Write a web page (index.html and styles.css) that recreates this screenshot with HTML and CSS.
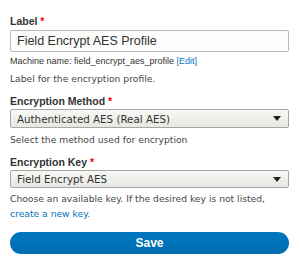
FILE: index.html
```html
<!DOCTYPE html>
<html lang="en">
<head>
<meta charset="UTF-8">
<meta name="viewport" content="width=device-width, initial-scale=1.0">
<title>Field Encrypt AES Profile</title>
<link rel="stylesheet" href="styles.css">
</head>
<body>

<form class="profile-form">
    <!-- Label -->
    <div class="form-item">
        <label class="form-label" for="label">Label <span class="required">*</span></label>
        <input type="text" id="label" class="form-text" value="Field Encrypt AES Profile">
        <div class="machine-name">Machine name: field_encrypt_aes_profile <a href="#">[Edit]</a></div>
        <div class="description">Label for the encryption profile.</div>
    </div>

    <!-- Encryption method -->
    <div class="form-item">
        <label class="form-label" for="method">Encryption Method <span class="required">*</span></label>
        <div class="select">
            <span>Authenticated AES (Real AES)</span>
            <span class="arrow"></span>
        </div>
        <div class="description">Select the method used for encryption</div>
    </div>

    <!-- Encryption key -->
    <div class="form-item item-key">
        <label class="form-label" for="key">Encryption Key <span class="required">*</span></label>
        <div class="select select-key">
            <span>Field Encrypt AES</span>
            <span class="arrow"></span>
        </div>
        <div class="description desc-key">Choose an available key. If the desired key is not listed,<br><a href="#">create a new key.</a></div>
    </div>

    <button type="button" class="btn">Save</button>
</form>

</body>
</html>
```

FILE: styles.css
```css
/* Profile form */
body {
    margin: 0;
    background-color: #fff;
    font-family: "Liberation Sans", Arial, sans-serif;
    color: #333;
}

.profile-form {
    padding: 14px 11px 0 10px;
}

.form-label {
    display: block;
    font-size: 10.5px;
    font-weight: bold;
    line-height: 14px;
    margin-bottom: 2px;
    color: #333;
}

.required {
    color: #e00;
}

.form-text {
    display: block;
    box-sizing: border-box;
    width: 100%;
    height: 22px;
    margin: 0;
    padding: 0 6px;
    border: 1px solid #b8b8b8;
    border-radius: 2px;
    background-color: #fcfcfa;
    font-family: inherit;
    font-size: 12.5px;
    color: #333;
}

.machine-name {
    font-size: 9px;
    line-height: 12px;
    margin-top: 3px;
    color: #333;
}

.machine-name a,
.description a {
    color: #0074bd;
    text-decoration: none;
}

.description {
    font-family: "DejaVu Sans", Verdana, sans-serif;
    font-size: 9.2px;
    line-height: 14px;
    margin-top: 5px;
    color: #474747;
}

.form-item {
    margin-bottom: 8px;
}

.select {
    box-sizing: border-box;
    height: 19px;
    display: flex;
    align-items: center;
    justify-content: space-between;
    padding: 0 6px;
    border: 1px solid #a6a6a6;
    border-radius: 2px;
    background: linear-gradient(#f7f7f4, #e8e8e2);
    font-family: "DejaVu Sans", Verdana, sans-serif;
    font-size: 10.3px;
    color: #333;
    margin-top: -1px;
}

.select-key {
    height: 18px;
    margin-top: -1px;
}

.arrow {
    width: 0;
    height: 0;
    border-left: 4px solid transparent;
    border-right: 4px solid transparent;
    border-top: 5px solid #222;
    margin-right: 1px;
}

.item-key {
    margin-bottom: 0;
}

.desc-key {
    margin-top: 3px;
    line-height: 15px;
}

.btn {
    display: block;
    width: 100%;
    height: 22px;
    margin-top: 11px;
    padding: 0;
    border: none;
    border-radius: 11px;
    background: linear-gradient(#0077c0, #006bb0);
    color: #fff;
    font-family: inherit;
    font-size: 12px;
    font-weight: bold;
    cursor: pointer;
}
```
